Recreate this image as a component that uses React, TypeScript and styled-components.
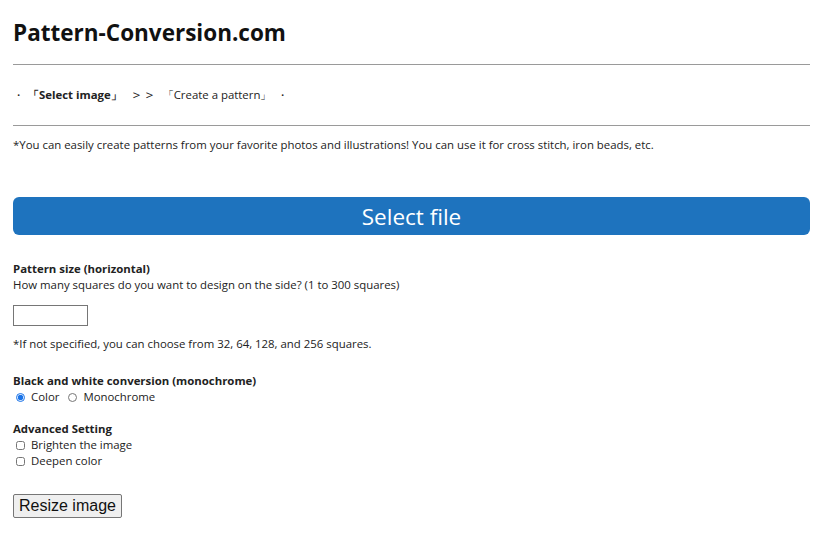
import React, { useState } from 'react';
import styled, { createGlobalStyle } from 'styled-components';

const GlobalStyle = createGlobalStyle`
  body {
    margin: 0;
    background: #fff;
    color: #222;
    font-family: "Open Sans", "Noto Sans", sans-serif;
  }
`;

const App = () => {
  const [mode, setMode] = useState('color');
  const [size, setSize] = useState('');

  return (
    <Page>
      <GlobalStyle />
      <SiteTitle>Pattern-Conversion.com</SiteTitle>
      <Rule />
      <Steps>
        <Dot>・</Dot>
        <Step active>「Select image」</Step>
        <Arrow>＞＞</Arrow>
        <Step>「Create a pattern」</Step>
        <Dot>・</Dot>
      </Steps>
      <Rule />
      <Intro>
        *You can easily create patterns from your favorite photos and illustrations! You can use it for cross stitch, iron beads, etc.
      </Intro>

      <SelectButton type="button">Select file</SelectButton>

      <Section gap={26}>
        <Label>Pattern size (horizontal)</Label>
        <Text>How many squares do you want to design on the side? (1 to 300 squares)</Text>
        <SizeInput value={size} onChange={(e) => setSize(e.target.value)} />
        <Text>*If not specified, you can choose from 32, 64, 128, and 256 squares.</Text>
      </Section>

      <Section gap={21}>
        <Label>Black and white conversion (monochrome)</Label>
        <Options>
          <Option>
            <Radio type="radio" name="mode" checked={mode === 'color'} onChange={() => setMode('color')} />
            Color
          </Option>
          <Option>
            <Radio type="radio" name="mode" checked={mode === 'mono'} onChange={() => setMode('mono')} />
            Monochrome
          </Option>
        </Options>
      </Section>

      <Section gap={16}>
        <Label>Advanced Setting</Label>
        <Option>
          <Check type="checkbox" />
          Brighten the image
        </Option>
        <Option>
          <Check type="checkbox" />
          Deepen color
        </Option>
      </Section>

      <ResizeButton type="button">Resize image</ResizeButton>
    </Page>
  );
};

export default App;

const Page = styled.div`
  padding: 17px 10px 20px 13px;
  font-size: 11.4px;
`;

const SiteTitle = styled.h1`
  margin: 0 0 16px;
  font-size: 22.5px;
  font-weight: bold;
  color: #111;
`;

const Rule = styled.div`
  border-top: 1px solid #9a9a9a;
`;

const Steps = styled.div`
  display: flex;
  align-items: center;
  height: 60px;
`;

const Dot = styled.span`
  margin-right: 4px;
`;

const Step = styled.span<{ active?: boolean }>`
  font-weight: ${(p) => (p.active ? 'bold' : 'normal')};
  margin-right: 6px;
`;

const Arrow = styled.span`
  margin: 0 7px 0 2px;
  font-size: 12.5px;
`;

const Intro = styled.p`
  margin: 11px 0 45px;
`;

const SelectButton = styled.button`
  display: block;
  width: 100%;
  height: 38px;
  border: none;
  border-radius: 6px;
  background: #1e73be;
  color: #fff;
  font-family: inherit;
  font-size: 22.5px;
  cursor: pointer;
`;

const Section = styled.div<{ gap: number }>`
  margin-top: ${(p) => p.gap}px;
`;

const Label = styled.div`
  font-weight: bold;
  line-height: 16px;
`;

const Text = styled.div`
  line-height: 16px;
`;

const SizeInput = styled.input`
  display: block;
  box-sizing: border-box;
  width: 75px;
  height: 21px;
  margin: 12px 0 10px;
  border: 1px solid #767676;
  border-radius: 0;
`;

const Options = styled.div`
  display: flex;
  gap: 6px;
`;

const Option = styled.label`
  display: flex;
  align-items: center;
  line-height: 16px;
`;

const Radio = styled.input`
  width: 9px;
  height: 9px;
  margin: 0 6px 0 3px;
  accent-color: #1a73e8;
`;

const Check = styled.input`
  width: 9px;
  height: 9px;
  margin: 0 6px 0 3px;
`;

const ResizeButton = styled.button`
  margin-top: 25px;
  height: 24px;
  padding: 0 5px;
  font-family: "Liberation Sans", Arial, sans-serif;
  font-size: 16px;
  color: #111;
  background: #efefef;
  border: 1px solid #767676;
  border-radius: 2px;
`;
